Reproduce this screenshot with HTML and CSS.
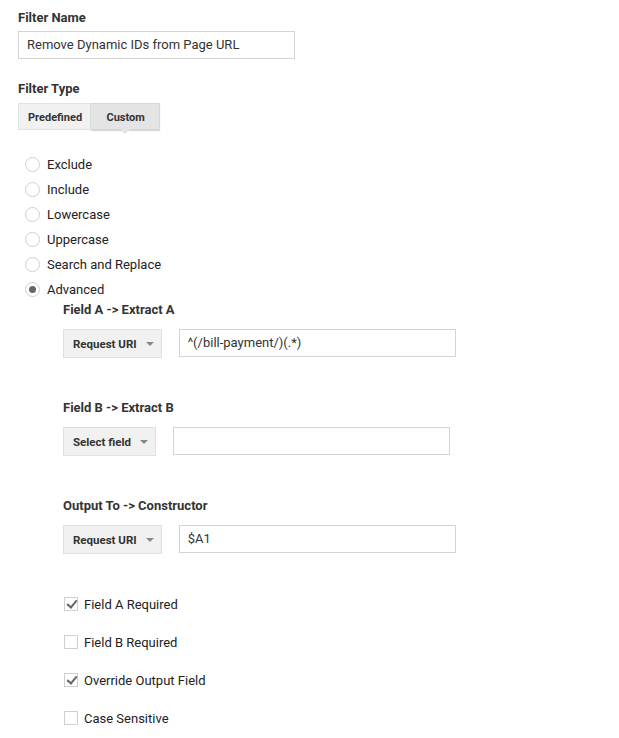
FILE: index.html
```html
<!DOCTYPE html>
<html lang="en">
<head>
    <meta charset="UTF-8">
    <title>Filter</title>
    <link rel="stylesheet" href="styles.css">
</head>
<body>
    <div class="form">
        <div class="label">Filter Name</div>
        <div class="text-input name-input">Remove Dynamic IDs from Page URL</div>

        <div class="label type-label">Filter Type</div>
        <div class="tabs">
            <div class="tab">Predefined</div>
            <div class="tab active">Custom</div>
        </div>

        <ul class="radios">
            <li><span class="radio"></span>Exclude</li>
            <li><span class="radio"></span>Include</li>
            <li><span class="radio"></span>Lowercase</li>
            <li><span class="radio"></span>Uppercase</li>
            <li><span class="radio"></span>Search and Replace</li>
            <li><span class="radio checked"></span>Advanced</li>
        </ul>

        <div class="advanced">
            <div class="section">
                <div class="label">Field A -&gt; Extract A</div>
                <div class="field-row">
                    <div class="dropdown">Request URI <span class="arrow"></span></div>
                    <div class="text-input">^(/bill-payment/)(.*)</div>
                </div>
            </div>

            <div class="section">
                <div class="label">Field B -&gt; Extract B</div>
                <div class="field-row">
                    <div class="dropdown">Select field <span class="arrow"></span></div>
                    <div class="text-input"></div>
                </div>
            </div>

            <div class="section output">
                <div class="label">Output To -&gt; Constructor</div>
                <div class="field-row">
                    <div class="dropdown">Request URI <span class="arrow"></span></div>
                    <div class="text-input">$A1</div>
                </div>
            </div>

            <ul class="checks">
                <li><span class="check on"></span>Field A Required</li>
                <li><span class="check"></span>Field B Required</li>
                <li><span class="check on"></span>Override Output Field</li>
                <li><span class="check"></span>Case Sensitive</li>
            </ul>
        </div>
    </div>
</body>
</html>
```

FILE: styles.css
```css
* {
    box-sizing: border-box;
}

body {
    margin: 0;
    background-color: #fff;
    font-family: Roboto, "Liberation Sans", sans-serif;
    font-size: 13px;
    color: #222;
}

.form {
    padding: 9px 0 0 18px;
}

.label {
    font-weight: bold;
    color: #333;
    line-height: 18px;
}

.text-input {
    width: 277px;
    height: 28px;
    border: 1px solid #d4d4d4;
    background-color: #fff;
    padding: 0 8px;
    line-height: 26px;
    color: #333;
}

.name-input {
    margin-top: 4px;
}

.type-label {
    margin-top: 21px;
}

.tabs {
    display: flex;
    margin-top: 5px;
}

.tab {
    position: relative;
    height: 27px;
    line-height: 27px;
    padding: 0 8px 0 9px;
    font-size: 11px;
    font-weight: bold;
    color: #333;
    background-color: #f1f1f1;
    border: 1px solid #e2e2e2;
}

.tab + .tab {
    border-left: none;
}

.tab.active {
    width: 69px;
    text-align: center;
    background-color: #e4e4e4;
    border-color: #d6d6d6;
    box-shadow: 0 1px 1px rgba(0, 0, 0, 0.15);
}

.tab.active::after {
    content: "";
    position: absolute;
    left: 50%;
    top: 100%;
    margin-left: -5px;
    border-left: 5px solid transparent;
    border-right: 5px solid transparent;
    border-top: 5px solid #e4e4e4;
}

.radios {
    list-style: none;
    margin: 22px 0 0 0;
    padding: 0 0 0 7px;
}

.radios li {
    display: flex;
    align-items: center;
    height: 25px;
}

.radio {
    width: 15px;
    height: 15px;
    border: 1px solid #cfcfcf;
    border-radius: 50%;
    margin-right: 7px;
    display: flex;
    align-items: center;
    justify-content: center;
}

.radio.checked::before {
    content: "";
    width: 7px;
    height: 7px;
    border-radius: 50%;
    background-color: #666;
}

.advanced {
    padding-left: 45px;
}

.section {
    margin-top: -1px;
    margin-bottom: 42px;
}

.section.output {
    margin-bottom: 31px;
}

.field-row {
    display: flex;
    gap: 17px;
    margin-top: 10px;
}

.dropdown {
    display: flex;
    align-items: center;
    height: 29px;
    padding: 0 7px 0 9px;
    font-size: 11.5px;
    font-weight: bold;
    color: #333;
    background-color: #f1f1f1;
    border: 1px solid #e0e0e0;
}

.arrow {
    margin-left: 9px;
    border-left: 4px solid transparent;
    border-right: 4px solid transparent;
    border-top: 4px solid #888;
}

.checks {
    list-style: none;
    margin: 0;
    padding: 0;
}

.checks li {
    display: flex;
    align-items: center;
    height: 38px;
}

.check {
    position: relative;
    width: 14px;
    height: 14px;
    border: 1px solid #cfcfcf;
    margin-left: 1px;
    margin-right: 6px;
}

.check.on::after {
    content: "";
    position: absolute;
    left: 4px;
    top: 0px;
    width: 4px;
    height: 8px;
    border-right: 2px solid #666;
    border-bottom: 2px solid #666;
    transform: rotate(40deg);
}
```
